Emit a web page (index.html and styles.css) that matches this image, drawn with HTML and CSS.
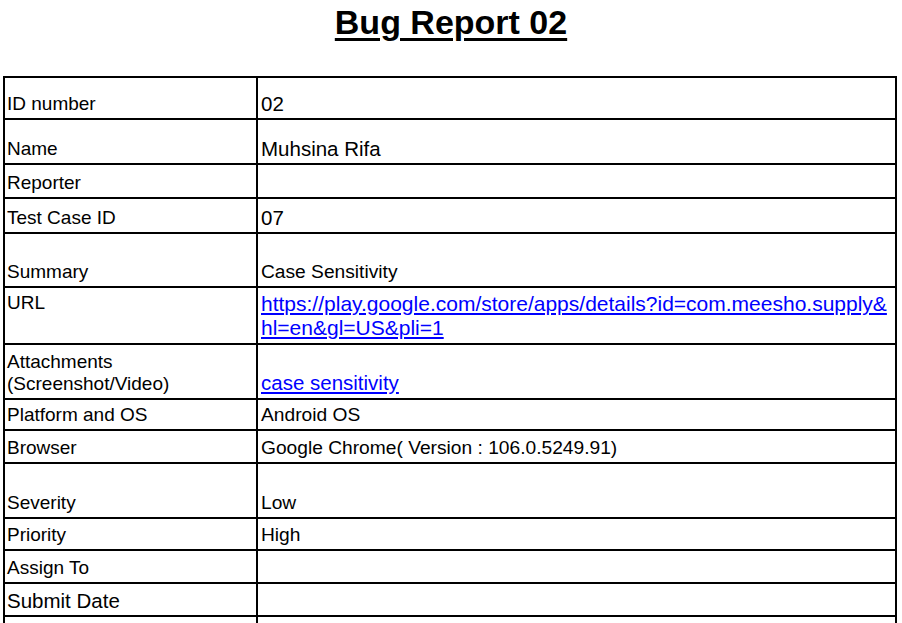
FILE: index.html
```html
<!DOCTYPE html>
<html>
<head>
<meta charset="utf-8">
<title>Bug Report 02</title>
<link rel="stylesheet" href="styles.css">
</head>
<body>
<h1 class="title"><span>Bug Report 02</span></h1>
<table class="report">
  <colgroup><col class="col-label"><col class="col-value"></colgroup>
  <tr class="h42"><td class="label">ID number</td><td class="value big">02</td></tr>
  <tr class="h45"><td class="label">Name</td><td class="value big">Muhsina Rifa</td></tr>
  <tr class="h34"><td class="label">Reporter</td><td class="value"></td></tr>
  <tr class="h35"><td class="label">Test Case ID</td><td class="value big">07</td></tr>
  <tr class="h54"><td class="label">Summary</td><td class="value">Case Sensitivity</td></tr>
  <tr class="h57"><td class="label top">URL</td><td class="value"><a class="link url" href="#">https://play.google.com/store/apps/details?id=com.meesho.supply&amp;<br>hl=en&amp;gl=US&amp;pli=1</a></td></tr>
  <tr class="h55"><td class="label">Attachments<br>(Screenshot/Video)</td><td class="value"><a class="link attach" href="#">case sensitivity</a></td></tr>
  <tr class="h31"><td class="label">Platform and OS</td><td class="value">Android OS</td></tr>
  <tr class="h33"><td class="label">Browser</td><td class="value">Google Chrome( Version : 106.0.5249.91)</td></tr>
  <tr class="h55"><td class="label">Severity</td><td class="value">Low</td></tr>
  <tr class="h32"><td class="label">Priority</td><td class="value">High</td></tr>
  <tr class="h33"><td class="label">Assign To</td><td class="value"></td></tr>
  <tr class="h33"><td class="label big">Submit Date</td><td class="value"></td></tr>
  <tr class="h33"><td class="label"></td><td class="value"></td></tr>
</table>
</body>
</html>
```

FILE: styles.css
```css
html, body {
  margin: 0;
  padding: 0;
  background: #ffffff;
}

body {
  font-family: "Liberation Sans", Arial, sans-serif;
  color: #000000;
}

.title {
  margin: 2px 0 0 0;
  text-align: center;
  font-size: 34px;
  line-height: 40px;
  font-weight: bold;
}

.title span {
  text-decoration: underline;
  text-decoration-thickness: 3px;
  text-underline-offset: 4px;
}

.report {
  margin: 34px 0 0 3px;
  width: 894px;
  border-collapse: collapse;
  table-layout: fixed;
}

.col-label { width: 253px; }

.report td {
  border: 2px solid #000000;
  padding: 0 3px 3px 2px;
  vertical-align: bottom;
  font-size: 19px;
  line-height: 22px;
}

.report td.value { padding-left: 3px; font-size: 19.2px; }

.report td.top { vertical-align: top; padding-top: 4px; }

.report td.big { font-size: 20.5px; }

.link {
  color: #0000ff;
  text-decoration: underline;
}

.url { font-size: 21px; line-height: 24px; }

.attach { font-size: 20.5px; line-height: 22px; }

.h31 { height: 31px; }
.h32 { height: 32px; }
.h33 { height: 33px; }
.h34 { height: 34px; }
.h35 { height: 35px; }
.h42 { height: 42px; }
.h45 { height: 45px; }
.h54 { height: 54px; }
.h55 { height: 55px; }
.h57 { height: 57px; }
```
